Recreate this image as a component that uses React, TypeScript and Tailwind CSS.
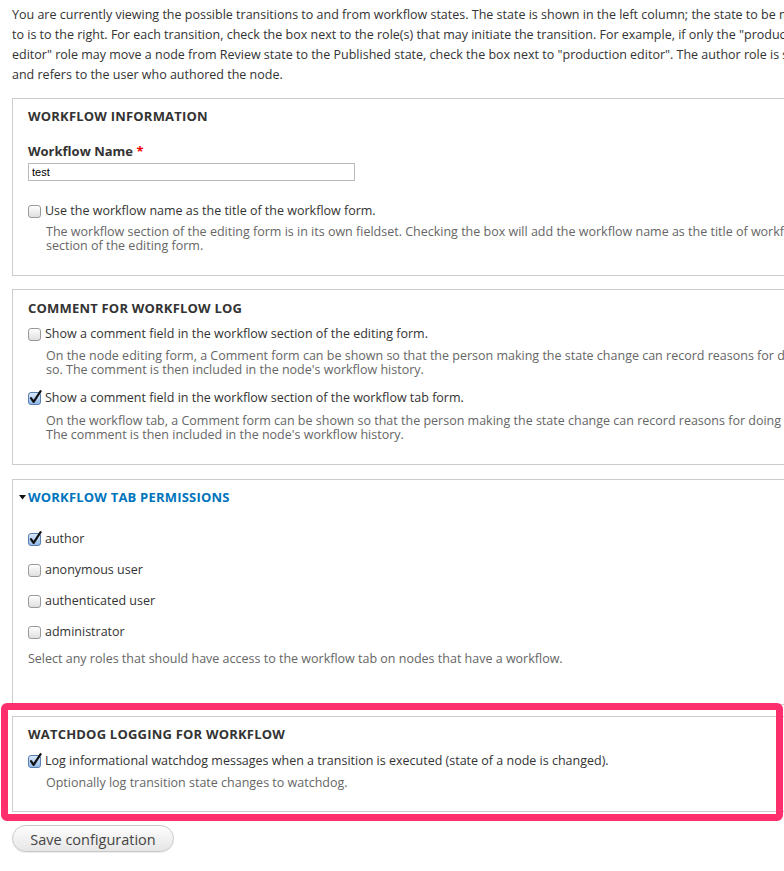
const FONT = { fontFamily: '"Open Sans", "Noto Sans", sans-serif' };

function Box({ checked = false }: { checked?: boolean }) {
  return (
    <svg width="16" height="16" viewBox="0 0 16 16" className="shrink-0 -ml-[1px] mr-[1px]">
      <defs>
        <linearGradient id="cbOff" x1="0" y1="0" x2="0" y2="1">
          <stop offset="0" stopColor="#ffffff" />
          <stop offset="1" stopColor="#dedede" />
        </linearGradient>
        <linearGradient id="cbOn" x1="0" y1="0" x2="0" y2="1">
          <stop offset="0" stopColor="#dbe9fb" />
          <stop offset="1" stopColor="#8fb7e8" />
        </linearGradient>
      </defs>
      <rect
        x="1.5"
        y="2.5"
        width="12"
        height="12"
        rx="2.5"
        fill={checked ? "url(#cbOn)" : "url(#cbOff)"}
        stroke={checked ? "#5a7fae" : "#9a9a9a"}
      />
      {checked && (
        <path d="M4 8.2 L6.6 11.8 L13.6 1.2" fill="none" stroke="#111" strokeWidth="2.2" strokeLinecap="round" strokeLinejoin="round" />
      )}
    </svg>
  );
}

function Check({ label, checked }: { label: string; checked?: boolean }) {
  return (
    <div className="flex items-center h-[18px] leading-[18px] text-[12.5px] text-[#333] whitespace-nowrap">
      <Box checked={checked} />
      <span className="ml-[1px]">{label}</span>
    </div>
  );
}

function Desc({ lines, className = "" }: { lines: string[]; className?: string }) {
  return (
    <div className={"pl-[18px] text-[12.5px] leading-[14px] text-[#666] whitespace-nowrap " + className}>
      {lines.map((l) => (
        <div key={l}>{l}</div>
      ))}
    </div>
  );
}

function Legend({ children }: { children: string }) {
  return (
    <div className="h-[18px] leading-[18px] text-[13px] tracking-[0.2px] font-bold uppercase text-[#333] whitespace-nowrap">
      {children}
    </div>
  );
}

export default function App() {
  return (
    <div className="relative w-[784px] h-[871px] overflow-hidden bg-white text-[#333]" style={FONT}>
      <div className="w-[1000px] pl-[12px]">
        <div className="pt-[5px] text-[12.5px] leading-[20px] whitespace-nowrap">
          <div>You are currently viewing the possible transitions to and from workflow states. The state is shown in the left column; the state to be moved</div>
          <div>to is to the right. For each transition, check the box next to the role(s) that may initiate the transition. For example, if only the "production</div>
          <div>editor" role may move a node from Review state to the Published state, check the box next to "production editor". The author role is special</div>
          <div>and refers to the user who authored the node.</div>
        </div>

        {/* workflow information */}
        <div className="mt-[13px] w-[900px] border border-[#ccc] px-[15px] pt-[8px] pb-[22px]">
          <Legend>Workflow Information</Legend>
          <div className="mt-[17px] h-[18px] leading-[18px] text-[13px] font-bold whitespace-nowrap">
            Workflow Name <span className="text-[#e00]">*</span>
          </div>
          <div
            className="mt-[3px] w-[327px] h-[18px] border border-[#bbb] px-[3px] text-[11px] leading-[16px] text-black"
            style={{ fontFamily: '"Liberation Sans", Arial, sans-serif' }}
          >
            test
          </div>
          <div className="mt-[21px]">
            <Check label="Use the workflow name as the title of the workflow form." />
          </div>
          <Desc
            className="mt-[5px]"
            lines={[
              "The workflow section of the editing form is in its own fieldset. Checking the box will add the workflow name as the title of workflow",
              "section of the editing form.",
            ]}
          />
        </div>

        {/* comment */}
        <div className="mt-[13px] w-[900px] border border-[#ccc] px-[15px] pt-[9px] pb-[22px]">
          <Legend>Comment for Workflow Log</Legend>
          <div className="mt-[8px]">
            <Check label="Show a comment field in the workflow section of the editing form." />
          </div>
          <Desc
            className="mt-[6px]"
            lines={[
              "On the node editing form, a Comment form can be shown so that the person making the state change can record reasons for doing",
              "so. The comment is then included in the node's workflow history.",
            ]}
          />
          <div className="mt-[12px]">
            <Check checked label="Show a comment field in the workflow section of the workflow tab form." />
          </div>
          <Desc
            className="mt-[7px]"
            lines={[
              "On the workflow tab, a Comment form can be shown so that the person making the state change can record reasons for doing so.",
              "The comment is then included in the node's workflow history.",
            ]}
          />
        </div>

        {/* tab permissions */}
        <div className="mt-[14px] w-[900px] h-[226px] border border-[#ccc] px-[15px] pt-[8px]">
          <div className="relative h-[18px] leading-[18px] text-[13px] tracking-[0.2px] font-bold uppercase text-[#0074bd] whitespace-nowrap">
            <svg width="7" height="5" viewBox="0 0 7 5" className="absolute left-[-9px] top-[7px]">
              <path d="M0 0 H7 L3.5 4.5 Z" fill="#111" />
            </svg>
            Workflow tab permissions
          </div>
          <div className="mt-[24px] flex flex-col gap-[13px]">
            <Check checked label="author" />
            <Check label="anonymous user" />
            <Check label="authenticated user" />
            <Check label="administrator" />
          </div>
          <div className="mt-[11px] text-[12.5px] leading-[14px] text-[#666] whitespace-nowrap">
            Select any roles that should have access to the workflow tab on nodes that have a workflow.
          </div>
        </div>

        {/* watchdog */}
        <div className="mt-[11px] w-[900px] border border-[#ccc] px-[15px] pt-[8px] pb-[21px]">
          <Legend>Watchdog Logging for Workflow</Legend>
          <div className="mt-[9px]">
            <Check checked label="Log informational watchdog messages when a transition is executed (state of a node is changed)." />
          </div>
          <Desc className="mt-[6px]" lines={["Optionally log transition state changes to watchdog."]} />
        </div>

        <button className="mt-[13px] w-[162px] h-[27px] pt-[2px] rounded-full border border-[#c8c8c8] bg-gradient-to-b from-[#fdfdfd] to-[#e6e6e6] text-[14.5px] leading-[23px] text-[#444] shadow-[0_1px_1px_rgba(0,0,0,0.08)]">
          Save configuration
        </button>
      </div>

      {/* highlight annotation */}
      <div className="absolute left-[1px] top-[703px] w-[782px] h-[118px] border-[7px] border-[#ff2e6d] rounded-[6px] pointer-events-none" />
    </div>
  );
}
